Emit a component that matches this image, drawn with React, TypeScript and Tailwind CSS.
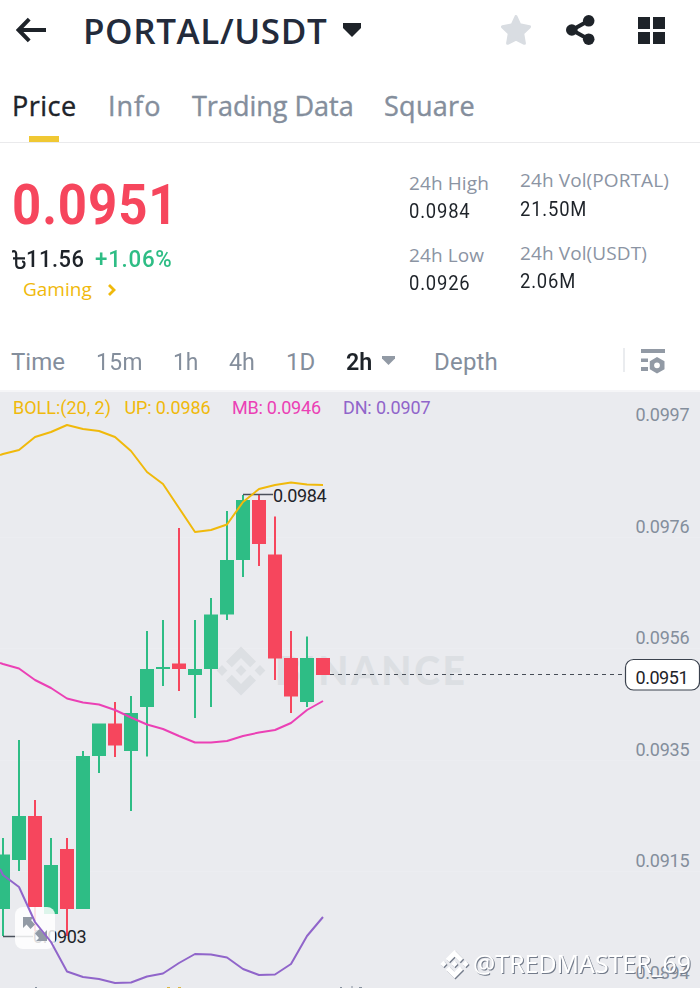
import React from "react";

type Candle = { up: boolean; high: number; low: number; top: number; bottom: number };

const c = (up: boolean, high: number, low: number, top: number, bottom: number): Candle => ({ up, high, low, top, bottom });

const candles: Candle[] = [
  c(true, 838, 936, 854.5, 909),
  c(true, 740, 871, 816, 860),
  c(false, 800, 931, 816, 907),
  c(true, 838, 914, 865, 914),
  c(false, 838, 936, 849, 909),
  c(true, 751, 909, 756, 909),
  c(true, 724, 773, 723.5, 756),
  c(false, 702, 757, 723.5, 745.5),
  c(true, 696, 811, 713, 751),
  c(true, 631, 756.5, 669, 707),
  c(true, 620, 686, 667, 669),
  c(false, 528, 691, 663.5, 669),
  c(true, 620, 718, 669, 675),
  c(true, 598, 707, 614.5, 669),
  c(true, 511, 620, 560, 614.5),
  c(true, 495, 577, 500, 560),
  c(false, 495, 566, 500, 544),
  c(false, 516.5, 680, 554.5, 658.5),
  c(false, 631, 713, 658, 696.5),
  c(true, 636.5, 707, 658, 702),
  c(false, 658, 675, 658, 675),
];

const upperBand = "0,455 3,454 19,450 35,437 51,432 67,425 83,429 99,431 115,437 131,451 147,472 163,484 179,508 195,532 211,530 227,524.5 243,502 259,489 275,485 291,482.5 307,484.5 323,485";
const middleBand = "0,663 3,664 19,668.5 35,680 51,688 67,698.5 83,702.5 99,704.5 115,710 131,717.5 147,724.5 163,729 179,736 195,742.5 211,742.5 227,741 243,736 259,732.5 275,730 291,723 307,710 323,701";
const lowerBand = "0,869 3,875 19,887 35,922 51,942 67,971.5 83,977 99,979 115,983 131,982.5 147,976.5 163,973.5 179,963 195,954 211,954.5 227,957.5 243,969 259,975 275,974.5 291,964 307,936 323,917";

const axis = [
  { v: "0.0997", y: 421 },
  { v: "0.0976", y: 533 },
  { v: "0.0956", y: 644 },
  { v: "0.0935", y: 756 },
  { v: "0.0915", y: 867 },
  { v: "0.0894", y: 979 },
];

const legend = [
  { t: "BOLL:(20, 2)", x: 13, w: 98, fill: "#f0b90b" },
  { t: "UP: 0.0986", x: 124.5, w: 86, fill: "#f0b90b" },
  { t: "MB: 0.0946", x: 232, w: 89, fill: "#eb40b5" },
  { t: "DN: 0.0907", x: 343, w: 87.5, fill: "#9065ca" },
];

function BinanceMark() {
  return (
    <g>
      <path d="M0-24 15-9 9.2-3.2 0-12.4-9.2-3.2-15-9Z" />
      <path d="M0 25 15 10 9.2 4.2 0 13.4-9.2 4.2-15 10Z" />
      <path d="M0-5.4 5.4 0 0 5.4-5.4 0Z" />
      <path d="M-19-5.4-13.6 0-19 5.4-24.4 0Z" />
      <path d="M19-5.4 24.4 0 19 5.4 13.6 0Z" />
    </g>
  );
}

function Header() {
  return (
    <header className="flex h-[60px] items-center pl-4 pr-[35px] font-['Open_Sans',sans-serif]">
      <svg width="30" height="26" viewBox="0 0 30 26" fill="none" stroke="#1e2329" strokeWidth="4">
        <path d="M30 13H3M13.2 2.2 2.6 13l10.6 10.8" />
      </svg>
      <h1 className="ml-[37px] w-[245px] whitespace-nowrap pt-px text-[35px] font-semibold leading-[48px] tracking-[0.6px] text-[#232b3b]">PORTAL/USDT</h1>
      <svg className="ml-[15px]" width="18" height="14" viewBox="0 0 18 14" fill="#1e2329">
        <path d="M0 0H18V5L9 14 0 5Z" />
      </svg>
      <svg className="ml-auto" width="30" height="30" viewBox="0 0 30 30" fill="#d9dde2" stroke="#d9dde2" strokeWidth="3" strokeLinejoin="round">
        <path d="M15 1.5 18.8 9.8 28.5 11.8 21.7 18.3 23.4 28.3 15 24.2 6.6 28.3 8.3 18.3 1.5 11.8 11.2 9.8Z" />
      </svg>
      <svg className="ml-[35px]" width="29" height="30" viewBox="0 0 29 30" fill="#1e2329">
        <path d="M22.5 5.7 6 15l16.5 9.3" fill="none" stroke="#1e2329" strokeWidth="4" />
        <circle cx="5.8" cy="15" r="5.8" />
        <circle cx="22.7" cy="5.8" r="5.8" />
        <circle cx="22.7" cy="24.2" r="5.8" />
      </svg>
      <div className="ml-[43px] grid grid-cols-2 gap-[3px]">
        {[0, 1, 2, 3].map((i) => (
          <span key={i} className="h-3 w-3 bg-[#1e2329]" />
        ))}
      </div>
    </header>
  );
}

function Tabs() {
  return (
    <nav className="flex h-[83px] items-stretch border-b border-[#eaeaec] pl-3 font-['Open_Sans',sans-serif] text-[27px] text-[#848e9c] [-webkit-text-stroke:0.4px]">
      <div className="flex w-[96px] flex-col justify-between pt-[27px]">
        <span className="leading-[37px] tracking-[0.5px] text-[#1e2329]">Price</span>
        <span className="ml-[17px] h-[6px] w-[30px] bg-[#f0c833]" />
      </div>
      <span className="w-[84px] pt-[27px] leading-[37px] tracking-[1px]">Info</span>
      <span className="w-[192px] whitespace-nowrap pt-[27px] leading-[37px]">Trading Data</span>
      <span className="pt-[27px] leading-[37px] tracking-[0.3px]">Square</span>
    </nav>
  );
}

function Stat({ label, value, tall }: { label: string; value: string; tall?: boolean }) {
  return (
    <div>
      <div className="whitespace-nowrap font-['Open_Sans',sans-serif] text-[19px] leading-[28px] tracking-[0.1px] text-[#8b94a3]">{label}</div>
      <div className={`origin-left scale-x-[0.92] text-[20px] tracking-[0.9px] text-[#1e2329] ${tall ? "leading-[30px]" : "leading-[29px]"}`}>{value}</div>
    </div>
  );
}

function Summary() {
  return (
    <section className="flex h-[187px]">
      <div className="w-[409px] pl-3 pt-[38px]">
        <div className="origin-left scale-x-[0.91] text-[56px] font-bold leading-[48px] tracking-[1px] text-[#f6465d]">0.0951</div>
        <div className="mt-[16px] flex gap-[11px] text-[24px] font-medium leading-[28px]">
          <span className="flex w-[72px] items-center whitespace-nowrap text-[#1e2329]">
            <svg className="shrink-0" width="14" height="20" viewBox="0 0 14 20" fill="none" stroke="#1e2329" strokeWidth="2.2">
              <path d="M0 3.2Q1 1.6 2.7 2.3 4.2 3 4.2 5V15Q4.2 19 8 19 12.5 19 12.5 14.8 12.5 12.5 10 12.5M1 9.3H13" />
            </svg>
            <span className="inline-block origin-left scale-x-[0.91] tracking-[0.6px]">11.56</span>
          </span>
          <span className="origin-left scale-x-[0.93] tracking-[0.8px] text-[#2ebd85]">+1.06%</span>
        </div>
        <div className="ml-[11px] mt-[2px] flex items-center gap-[16px] font-['Open_Sans',sans-serif] text-[19px] leading-[29px] text-[#f0b90b]">
          Gaming
          <svg width="8" height="12" viewBox="0 0 8 12" fill="none" stroke="#f0b90b" strokeWidth="2.8">
            <path d="M1 1 6 6 1 11" />
          </svg>
        </div>
      </div>
      <div className="flex w-[111px] flex-col gap-[15px] pt-[26px]">
        <Stat label="24h High" value="0.0984" />
        <Stat label="24h Low" value="0.0926" />
      </div>
      <div className="flex flex-col gap-[15px] pt-[23px]">
        <Stat label="24h Vol(PORTAL)" value="21.50M" tall />
        <Stat label="24h Vol(USDT)" value="2.06M" />
      </div>
    </section>
  );
}

function Intervals() {
  return (
    <nav className="flex h-[60px] items-center pl-[11px] pt-1 text-[24px] text-[#848e9c]">
      <span className="w-[85px]">Time</span>
      <span className="w-[77px] origin-left scale-x-[0.95] tracking-[0.5px]">15m</span>
      <span className="w-[56px] origin-left scale-x-[0.95]">1h</span>
      <span className="w-[57px] origin-left scale-x-[0.97]">4h</span>
      <span className="w-[60px]">1D</span>
      <span className="w-[36px] origin-left scale-x-[0.97] font-semibold text-[#1e2329]">2h</span>
      <svg className="-mt-[3px]" width="13" height="9" viewBox="0 0 13 9" fill="#929aa5">
        <path d="M0 0H13V2.5L6.5 9 0 2.5Z" />
      </svg>
      <span className="ml-[39px] w-[189px] tracking-[0.2px]">Depth</span>
      <span className="-mt-1 h-6 w-[2px] bg-[#eaecef]" />
      <svg className="-mt-[1px] ml-4" width="24" height="25" viewBox="0 0 24 25" fill="#929aa5">
        <path d="M0 0H24V4H0ZM0 9.5H7V13H0ZM0 18H7V22H0Z" />
        <path fillRule="evenodd" d="M16 8 23.5 12.2V20.3L16 24.5 8.8 20.3V12.2ZM16 13.4A2.9 2.9 0 1 0 16 19.2 2.9 2.9 0 1 0 16 13.4Z" />
      </svg>
    </nav>
  );
}

function Chart() {
  return (
    <svg className="block" width="700" height="596" viewBox="0 392 700 596" fontFamily="Roboto, sans-serif" fontSize="18">
      <rect y="392" width="700" height="596" fill="#eaebef" />
      <path d="M0 537.5H700M0 648.5H700M0 760.5H700M0 871.5H700" stroke="#ecedf1" />

      <g fill="#dcdfe3">
        <g transform="translate(241 670.5)">
          <BinanceMark />
        </g>
        <text x="275" y="685" fontFamily="Lato, sans-serif" fontWeight="900" fontSize="39" textLength="190">BINANCE</text>
      </g>

      {legend.map((l) => (
        <text key={l.t} x={l.x} y="414" fill={l.fill} textLength={l.w}>{l.t}</text>
      ))}
      {axis.map((a) => (
        <text key={a.v} x="635.5" y={a.y} fill="#848e9c" textLength="54">{a.v}</text>
      ))}

      {candles.map((k, i) => {
        const x = 3 + i * 16;
        return (
          <g key={i} fill={k.up ? "#2ebd85" : "#f6465d"}>
            <rect x={x - 1} y={k.high} width="2" height={k.low - k.high} />
            <rect x={x - 7} y={k.top} width="14" height={k.bottom - k.top} />
          </g>
        );
      })}

      <path d="M243 494.5H273M3 936.5H33" stroke="#4a505b" strokeWidth="1.3" />
      <g fill="#1e2329">
        <text x="273" y="502" textLength="53.5">0.0984</text>
        <text x="33" y="943" textLength="53.5">0.0903</text>
      </g>

      <rect x="15" y="907" width="40" height="42" rx="8" fill="#fff" fillOpacity="0.84" />
      <path d="M23 917H34L31 920 35 924.5 30.5 929 26.5 924.5 23 928Z" fill="#929aa5" />
      <path d="M47 941H36L39 938 35 933.5 39.5 929 43.5 933.5 47 930Z" fill="#929aa5" />

      <g fill="none" strokeWidth="2" strokeLinejoin="round">
        <polyline points={upperBand} stroke="#f0b90b" />
        <polyline points={middleBand} stroke="#eb40b5" />
        <polyline points={lowerBand} stroke="#9065ca" />
      </g>

      <path d="M330 674.5H625" stroke="#474d57" strokeWidth="1.2" strokeDasharray="4 4" />
      <rect x="625.5" y="659.5" width="74" height="30.5" rx="8" fill="#fff" stroke="#3b424e" strokeWidth="1.2" />
      <text x="635.5" y="684" fill="#1e2329" textLength="53">0.0951</text>

      <path d="M35 987.5H37M340 987.5H342M352 986V988M359 987.5H362" stroke="#848e9c" />
      <path d="M167 987.5H170M178 987.5H181" stroke="#d9b544" />

      <g className="[filter:drop-shadow(1px_1px_0.5px_#737b8a)]" fill="#fff">
        <g transform="translate(454.5 964) scale(.58)">
          <BinanceMark />
        </g>
        <text x="473" y="973" fontFamily="Noto Sans, sans-serif" fontSize="24.5" textLength="218" lengthAdjust="spacingAndGlyphs">@TREDMASTER_69</text>
      </g>
    </svg>
  );
}

export default function App() {
  return (
    <main className="h-[988px] w-[700px] overflow-hidden bg-white font-[Roboto,sans-serif]">
      <Header />
      <Tabs />
      <Summary />
      <Intervals />
      <div className="h-[2px] bg-[#f5f5f7]" />
      <Chart />
    </main>
  );
}
